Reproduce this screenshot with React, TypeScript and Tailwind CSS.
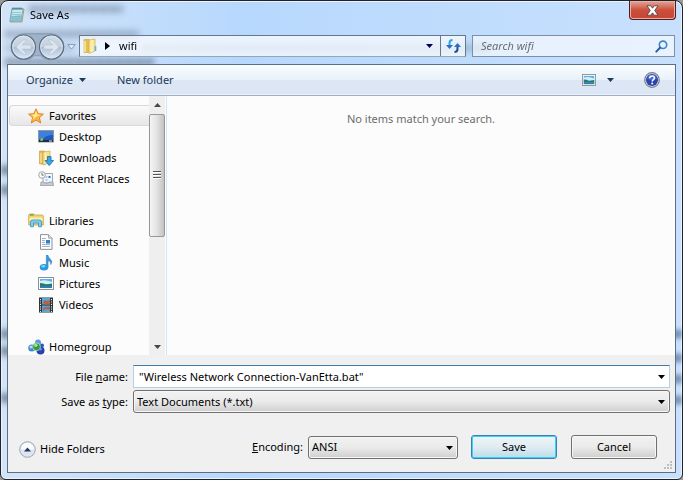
import React, { ReactNode } from "react";

function Svg({ w, h, children, className = "" }: { w: number; h: number; children: ReactNode; className?: string }) {
  return (
    <svg width={w} height={h} viewBox={`0 0 ${w} ${h}`} className={`shrink-0 ${className}`} aria-hidden="true">
      {children}
    </svg>
  );
}

function Caret({ className = "" }: { className?: string }) {
  return (
    <Svg w={7} h={4} className={className}>
      <path d="M0 0h7L3.5 4z" fill="currentColor" />
    </Svg>
  );
}

function NotepadIcon() {
  return (
    <Svg w={16} h={16}>
      <path d="M3 2h12l-2 13H1z" fill="#d8c9a0" stroke="#8f8a78" strokeWidth=".7" />
      <path d="M3 1.5h11l-2 12.5H.8z" fill="#8fc9d8" stroke="#68a3b5" strokeWidth=".6" />
      <path d="M3.6 3h9.6l-.8 5L2.8 9z" fill="#c9ebf0" />
      <path d="M3.2 5.5h9M2.9 7.5h9M2.6 9.5h9M2.3 11.5h9" stroke="#6db0c0" strokeWidth=".6" />
      <path d="M4 .5v2M6 .5v2M8 .5v2M10 .5v2M12 .5v2" stroke="#45565c" strokeWidth=".9" />
    </Svg>
  );
}

function FolderIcon() {
  return (
    <Svg w={14} h={16}>
      <path d="M1 1.5h5l1 1v12H1z" fill="#e4be4e" stroke="#c9a23b" strokeWidth=".6" />
      <path d="M6 2l6-1v12l-6 2.5z" fill="#f8e69c" stroke="#d0ac48" strokeWidth=".7" />
      <path d="M2 3v11M9 2v12" stroke="#fff4bd" strokeWidth="1.2" />
      <path d="M12.5 8v5" stroke="#5fb4dc" strokeWidth="1.6" />
    </Svg>
  );
}

function NavArrows() {
  return (
    <div className="relative flex h-7 w-[55px] shrink-0 gap-[2px]">
      <svg width="55" height="28" className="absolute inset-0" aria-hidden="true">
        <defs>
          <linearGradient id="orb" x2="0" y2="1">
            <stop stopColor="#d2dce7" />
            <stop offset=".48" stopColor="#c3d0df" />
            <stop offset=".52" stopColor="#b0c0d2" />
            <stop offset="1" stopColor="#d9e9fa" />
          </linearGradient>
        </defs>
        <path d="M14 .8h27a13 13 0 0 1 0 26q-7 0-10-4h-7q-3 4-10 4a13 13 0 0 1 0-26z" fill="#9eb2c9" stroke="#8195ad" />
        <circle cx="13.500" cy="14" r="12" fill="url(#orb)" stroke="#5d6e83" strokeWidth="1.2" />
        <circle cx="41.500" cy="14" r="12" fill="url(#orb)" stroke="#5d6e83" strokeWidth="1.2" />
        <circle cx="13.500" cy="14" r="10.800" fill="none" stroke="#dfe9f3" strokeWidth=".8" />
        <circle cx="41.500" cy="14" r="10.800" fill="none" stroke="#dfe9f3" strokeWidth=".8" />
        <path d="M6 14l7-7h4l-5 5h9v4h-9l5 5h-4z" fill="#dce5ef" stroke="#b3c2d2" strokeWidth=".6" />
        <path d="M49 14l-7-7h-4l5 5h-9v4h9l-5 5h4z" fill="#dce5ef" stroke="#b3c2d2" strokeWidth=".6" />
      </svg>
      <button aria-label="Back" className="relative h-7 flex-1 rounded-full" />
      <button aria-label="Forward" className="relative h-7 flex-1 rounded-full" />
    </div>
  );
}

function RefreshIcon() {
  return (
    <Svg w={15} h={14}>
      <path d="M6.500 1Q3.500 1 3.500 4v3" fill="none" stroke="#2fa4e6" strokeWidth="2" />
      <path d="M0 6h7L3.500 10z" fill="#2b6fc0" />
      <path d="M8.500 13q3 0 3-3V7" fill="none" stroke="#1c4d9c" strokeWidth="2" />
      <path d="M8 8h7l-3.500-4z" fill="#2b6fc0" />
    </Svg>
  );
}

function SearchIcon() {
  return (
    <Svg w={13} h={13}>
      <circle cx="8" cy="4.800" r="3.700" fill="#eaf6ff" stroke="#3a86cc" strokeWidth="1.600" />
      <path d="M5.200 7.500L1.300 11.600" stroke="#2a5dab" strokeWidth="2" strokeLinecap="round" />
    </Svg>
  );
}

function PictureIcon({ w, h }: { w: number; h: number }) {
  return (
    <svg width={w} height={h} viewBox="0 0 16 13" preserveAspectRatio="none" className="shrink-0" aria-hidden="true">
      <rect x=".5" y=".5" width="15" height="12" fill="#fff" stroke="#8a9299" />
      <rect x="2" y="2" width="12" height="9" fill="#5fb2e6" />
      <path d="M2 4q5-2 12 1v2H2z" fill="#d5effa" />
      <path d="M2 6q4 0 6 1.500l6-1V9H2z" fill="#2b7a62" />
      <path d="M2 9h12v2H2z" fill="#2f7fae" />
    </svg>
  );
}

function HelpIcon() {
  return (
    <svg width="16" height="16" viewBox="0 0 16 16" aria-hidden="true">
      <circle cx="8" cy="8" r="7.300" fill="#d9dce2" stroke="#7b828d" strokeWidth="1.200" />
      <circle cx="8" cy="8" r="6" fill="#2745ac" />
      <path d="M3 6.500a5.200 5.200 0 0 1 10 0q-5 3-10 0z" fill="#4a6ccb" />
      <path d="M5.700 6.300q0-2.300 2.400-2.300t2.300 2c0 1.500-2.200 1.600-2.200 3.400" fill="none" stroke="#fff" strokeWidth="1.600" />
      <circle cx="8.200" cy="11.600" r="1" fill="#fff" />
    </svg>
  );
}

function StarIcon() {
  return (
    <Svg w={16} h={16}>
      <path d="M8 .8l2.100 4.900 5.300.4-4 3.500 1.300 5.400L8 12.100 3.300 15l1.300-5.400-4-3.500 5.300-.4z" fill="#fbb33b" stroke="#e27a24" strokeWidth=".9" />
      <path d="M8 3l1.400 3.500 3.600.4-4.500 1.600L4.500 12l1.200-3.500L3 6.800l3.500-.3z" fill="#ffe991" />
    </Svg>
  );
}

function DesktopIcon() {
  return (
    <Svg w={16} h={14}>
      <rect x=".5" y=".5" width="15" height="11.500" fill="#2358b6" stroke="#8b98a8" />
      <path d="M1 1h14v4Q8 5 5 9H1z" fill="#3f80dc" />
      <path d="M1 10h14v2H1z" fill="#1d2c49" />
      <circle cx="3.500" cy="9.800" r="1.500" fill="#58b84c" />
      <path d="M3.500 8.300v1.500H5a1.500 1.500 0 0 0-1.500-1.500z" fill="#f5cf31" />
      <path d="M11 11h3" stroke="#e8eef4" />
    </Svg>
  );
}

function DownloadsIcon() {
  return (
    <Svg w={16} h={16}>
      <path d="M1.500 1h5v13h-5z" fill="#e2ba50" stroke="#c49a3b" strokeWidth=".6" />
      <path d="M5 2l7-1v12l-7 2z" fill="#f6e293" stroke="#caa650" strokeWidth=".7" />
      <path d="M3 3v10M7.500 3v9" stroke="#fff3b9" />
      <path d="M9.500 6.500h3.500v4h2.500L11.300 15.500 7 10.500h2.500z" fill="#38a6e8" stroke="#196aa9" strokeWidth=".8" />
    </Svg>
  );
}

function RecentIcon() {
  return (
    <Svg w={16} h={16}>
      <path d="M5 2.500h9.500V12H5z" fill="#f5f8fa" stroke="#a3a8ad" />
      <path d="M7.500 5h2v2h-2zM7.500 8h2v2h-2z" fill="#a9cbe8" />
      <path d="M10.500 5h2v2h-2z" fill="#2474cc" />
      <path d="M3 11h3l1 1h3l1-1h4l.5 3.500H2.500z" fill="#c6cacf" stroke="#8f959b" strokeWidth=".7" />
      <circle cx="4" cy="4" r="3.300" fill="#f8fafb" stroke="#a0a7ad" />
      <path d="M4 2v2.200h1.600" fill="none" stroke="#4c5660" strokeWidth=".8" />
    </Svg>
  );
}

function LibrariesIcon() {
  return (
    <Svg w={16} h={15}>
      <path d="M.7 2Q.7 1 2 1h4l1 1h7.500l.8 1v9H.7z" fill="#efd272" stroke="#c5a34b" strokeWidth=".8" />
      <path d="M2 2h3.500" stroke="#55a640" strokeWidth="1.300" />
      <path d="M1.500 4.500h13V8h-13z" fill="#fbeeae" />
      <path d="M2.500 13.800V9q0-2 2-2h7q2 0 2 2v4.800h-3V10h-5v3.800z" fill="#78cdf0" stroke="#3d94c0" strokeWidth=".8" />
    </Svg>
  );
}

function DocumentsIcon() {
  return (
    <Svg w={16} h={16}>
      <path d="M2.500.6h8l3.500 3.500v11.300H2.500z" fill="#fbfdff" stroke="#80878f" strokeWidth=".9" />
      <path d="M10.500.8v3.300H14" fill="#dce5ed" stroke="#80878f" strokeWidth=".7" />
      <path d="M4 4.500h4M4 6.500h3M4 8.500h3M4 10.500h8M4 12.500h8" stroke="#8ba0ba" strokeWidth=".8" />
      <path d="M8 6h4v3.500H8z" fill="#2e7fc7" />
    </Svg>
  );
}

function MusicIcon() {
  return (
    <Svg w={16} h={16}>
      <path d="M8.300 0h1.500q.4 2.500 2.700 4.200 2.500 2.200.3 5.500.4-3-2.700-3.900V12.500H8.300z" fill="#3997db" stroke="#2270b5" strokeWidth=".4" />
      <ellipse cx="6" cy="12.200" rx="4.200" ry="3.200" fill="#2798de" />
      <ellipse cx="5.300" cy="11.200" rx="2.200" ry="1.300" fill="#80cdf5" />
    </Svg>
  );
}

function VideosIcon() {
  return (
    <Svg w={16} h={16}>
      <path d="M1 .5h14v15H1z" fill="#283333" />
      <path d="M4 1h8v6.500H4zm0 7.500h8V15H4z" fill="#55a7e1" />
      <path d="M5 5q2-3 4-1l3-1v4.500H6zm0 6q4-2 7-1v3l-4-1-3 2z" fill="#b66243" />
      <path d="M2.500 2v13M13.500 2v13" stroke="#e6eded" strokeWidth="1.100" strokeDasharray="1.200 1.200" />
    </Svg>
  );
}

function HomegroupIcon() {
  return (
    <Svg w={17} h={16}>
      <circle cx="10" cy="3.500" r="3" fill="#5b9bdd" />
      <circle cx="3.800" cy="9" r="3.600" fill="#4389d2" />
      <circle cx="12.500" cy="11.500" r="4" fill="#2742ad" />
      <circle cx="14" cy="6.500" r="2" fill="#2f55bd" />
      <circle cx="8.500" cy="7.800" r="3.900" fill="#2f9a3e" stroke="#d0ebd2" strokeWidth=".7" />
      <circle cx="7.800" cy="6.300" r="1.700" fill="#a3e38e" />
      <circle cx="12.300" cy="10" r="1.500" fill="#7498e5" />
      <circle cx="3" cy="8" r="1.500" fill="#b5dbfa" />
    </Svg>
  );
}

/* Blurred editor contents showing through the glass frame. */
function GlassBackdrop() {
  return (
    <div aria-hidden="true" className="pointer-events-none absolute inset-0 overflow-hidden rounded-[inherit]">
      <svg width="100%" height="100%" className="absolute inset-0 blur-[3px]">
        <g stroke="#4a5d75" strokeWidth="7" strokeDasharray="9 1" opacity=".6">
          <path d="M28 8H122" opacity=".75" />
          <path d="M4 33H138" opacity=".7" />
          <path d="M4 61H153" />
          <path d="M4 47H72" opacity=".4" />
          <path d="M140 47H490" opacity=".5" />
        </g>
        <path d="M0 169H9M0 189H9M0 333H9M0 350H9M0 397H9" stroke="#2c4868" strokeWidth="9" opacity=".65" />
      </svg>
      <svg width="9" height="100%" className="absolute top-0 right-0 blur-[2px]">
        <path d="M0 333H9M0 357H9M0 378H9M0 399H9" stroke="#3e6288" strokeWidth="9" opacity=".6" />
      </svg>
    </div>
  );
}

function NavRow({ icon, children, root = false, selected = false }: { icon: ReactNode; children: ReactNode; root?: boolean; selected?: boolean }) {
  return (
    <li
      className={`flex h-[21px] shrink-0 items-center gap-[5px] border ${root ? "pl-[18px]" : "pl-7"} ${
        selected ? "rounded-l-sm border-r-0 border-[#d9d9d9] bg-linear-to-b from-[#fafafa] to-[#e7e7e7]" : "border-transparent"
      }`}
    >
      <span className="flex w-4 shrink-0 justify-center">{icon}</span>
      <a href="#" className="whitespace-nowrap">{children}</a>
    </li>
  );
}

export default function App() {
  const classic = "rounded-[3px] border border-[#707070] bg-linear-to-b from-[#f2f2f2] from-0% via-[#ebebeb] via-48% to-[#cfcfcf] shadow-[inset_0_0_0_1px_#f7f7f7]";
  return (
    <div className="bg-[#999] font-['Noto_Sans','Open_Sans',sans-serif] text-[11px] leading-4 text-black">
      <div className="relative flex h-screen min-h-[400px] flex-col rounded-t-lg rounded-b-md border border-[#20232b] bg-linear-to-r from-[#d3e4f8] via-[#b7d8fd] via-35% to-[#c8e0fd] px-[6px] pb-[6px] shadow-[inset_0_0_0_1px_#e9f4ff]">
        <GlassBackdrop />

        <header className="relative flex h-[33px] shrink-0 items-start justify-between">
          <h1 className="flex items-center gap-[5px] pt-[6px] pl-[2px] font-normal">
            <NotepadIcon />
            Save As
          </h1>
          <button
            aria-label="Close"
            className="flex h-[19px] w-[47px] items-center justify-center rounded-b-[4px] border border-t-0 border-[#4b1d20] bg-linear-to-b from-[#e0a59b] from-0% via-[#cb4f3b] via-50% to-[#c84532] shadow-[inset_0_0_0_1px_#ecb1a5]"
          >
            <Svg w={13} h={11}>
              <path d="M1 .8h3.800l1.700 2.400L8.200.8H12L8.700 5.500 12 10.200H8.200L6.500 7.800 4.800 10.200H1l3.300-4.700z" fill="#fff" stroke="#54474c" strokeWidth=".9" />
            </Svg>
          </button>
        </header>

        <nav className="relative flex h-[30px] shrink-0 items-start gap-[6px] pt-px pr-px pl-[3px]">
          <div className="flex h-6 items-center gap-[2px]">
            <NavArrows />
            <button aria-label="Recent locations" className="flex h-6 w-[9px] items-center">
              <Svg w={9} h={6}>
                <path d="M.8.6h7.400L4.500 5z" fill="#e3eefb" stroke="#7993b0" strokeWidth=".9" />
              </Svg>
            </button>
          </div>
          <div className="-ml-[3px] flex h-[22px] min-w-0 flex-1 items-stretch border border-[#67788c] border-b-[#94a6ba] bg-white/70">
            <div className="flex min-w-0 flex-1 items-center pl-[3px]">
              <FolderIcon />
              <Svg w={5} h={8} className="ml-2">
                <path d="M0 0v8l5-4z" fill="#000" />
              </Svg>
              <span className="ml-[9px]">wifi</span>
            </div>
            <button aria-label="Previous locations" className="flex w-[18px] items-center justify-center pr-1 text-[#00005a]">
              <Caret />
            </button>
            <button aria-label="Refresh" className="flex w-[25px] items-center justify-center border-l border-[#67788c]">
              <RefreshIcon />
            </button>
          </div>
          <div className="flex h-[22px] w-[203px] items-center border border-[#7c90a6] bg-white/60 pr-[6px] pl-2">
            <input aria-label="Search wifi" placeholder="Search wifi" className="min-w-0 flex-1 bg-transparent italic outline-none placeholder:text-[#666c73]" />
            <button aria-label="Search">
              <SearchIcon />
            </button>
          </div>
        </nav>

        <main className="relative flex min-h-0 flex-1 flex-col border border-[#5b6e84] bg-[#f0f0f0]">
          <div className="flex h-[31px] shrink-0 items-center border-b border-[#a0afc3] bg-linear-to-b from-[#fafdff] from-0% via-[#e8f1fb] via-50% to-[#dce6f4] to-50% pr-[15px] pl-[18px] text-[#1e395b] shadow-[inset_0_-1px_0_#e8f2fc]">
            <button className="flex items-center gap-[6px]">
              Organize <Caret />
            </button>
            <button className="ml-[31px]">New folder</button>
            <button aria-label="Change view" className="ml-auto flex items-center">
              <PictureIcon w={14} h={12} />
            </button>
            <button aria-label="More view options" className="ml-[11px]">
              <Caret />
            </button>
            <button aria-label="Help" className="ml-[30px]">
              <HelpIcon />
            </button>
          </div>

          <div className="flex min-h-0 flex-1 bg-[#fcfcfc]">
            <div className="flex w-[159px] shrink-0 border-r border-[#d6e5f5]">
              <ul className="flex min-w-0 flex-1 flex-col overflow-hidden pt-[9px] pl-px">
                <NavRow root selected icon={<StarIcon />}>Favorites</NavRow>
                <NavRow icon={<DesktopIcon />}>Desktop</NavRow>
                <NavRow icon={<DownloadsIcon />}>Downloads</NavRow>
                <NavRow icon={<RecentIcon />}>Recent Places</NavRow>
                <li className="h-[21px] shrink-0" />
                <NavRow root icon={<LibrariesIcon />}>Libraries</NavRow>
                <NavRow icon={<DocumentsIcon />}>Documents</NavRow>
                <NavRow icon={<MusicIcon />}>Music</NavRow>
                <NavRow icon={<PictureIcon w={16} h={13} />}>Pictures</NavRow>
                <NavRow icon={<VideosIcon />}>Videos</NavRow>
                <li className="h-[21px] shrink-0" />
                <NavRow root icon={<HomegroupIcon />}>Homegroup</NavRow>
              </ul>
              <div className="mr-px flex w-4 shrink-0 flex-col bg-[#efefef] text-[#484848]">
                <button aria-label="Scroll up" className="flex h-[18px] items-center justify-center">
                  <Caret className="rotate-180" />
                </button>
                <div className="flex h-[123px] flex-col items-center justify-center gap-px rounded-[2px] border border-[#979797] bg-linear-to-r from-[#f5f5f5] via-[#e2e2e2] via-50% to-[#c2c2c5]">
                  <Svg w={8} h={9}>
                    <path d="M0 .5h8M0 3.500h8M0 6.500h8" stroke="#555" />
                    <path d="M0 1.500h8M0 4.500h8M0 7.500h8" stroke="#fff" />
                  </Svg>
                </div>
                <button aria-label="Scroll down" className="mt-auto flex h-[17px] items-center justify-center">
                  <Caret />
                </button>
              </div>
            </div>
            <p className="flex-1 pt-[15px] text-center text-[#6d6d6d]">No items match your search.</p>
          </div>

          <form className="relative shrink-0 pt-[10px] pr-[5px] pb-[13px]" onSubmit={(e) => e.preventDefault()}>
            <div className="grid grid-cols-[120px_1fr] items-center gap-x-[5px] gap-y-[2px]">
              <label htmlFor="name" className="text-right">
                File <u>n</u>ame:
              </label>
              <div className="flex h-[23px] border border-[#b5cfe7] border-t-[#3d7bad] bg-white">
                <input id="name" defaultValue={'"Wireless Network Connection-VanEtta.bat"'} className="min-w-0 flex-1 pl-[5px] outline-none" />
                <button type="button" aria-label="Previous file names" className="flex w-4 items-center justify-center">
                  <Caret />
                </button>
              </div>
              <label htmlFor="type" className="text-right">
                Save as <u>t</u>ype:
              </label>
              <div className="relative flex h-[23px]">
                <select id="type" className={`flex-1 appearance-none pl-[3px] outline-none ${classic}`}>
                  <option>Text Documents (*.txt)</option>
                </select>
                <Caret className="pointer-events-none absolute top-[10px] right-[5px]" />
              </div>
            </div>
            <div className="mt-[22px] flex items-center pr-[13px] pl-[11px]">
              <button type="button" className="flex items-center gap-1 pt-1">
                <Svg w={17} h={17}>
                  <circle cx="8.500" cy="8.500" r="7.800" fill="#dfe5ed" stroke="#9ba7b8" />
                  <path d="M1.800 8.500a6.700 6.700 0 0 1 13.400 0z" fill="#f9fbfd" />
                  <path d="M5 10.500h7L8.500 6.500z" fill="#1e3969" />
                </Svg>
                Hide Folders
              </button>
              <label htmlFor="encoding" className="ml-auto">
                <u>E</u>ncoding:
              </label>
              <div className="relative ml-[5px] flex h-[23px] w-[150px]">
                <select id="encoding" className={`flex-1 appearance-none pl-[3px] outline-none ${classic}`}>
                  <option>ANSI</option>
                </select>
                <Caret className="pointer-events-none absolute top-[10px] right-[5px]" />
              </div>
              <button
                type="submit"
                className="ml-[13px] h-6 w-[86px] rounded-[3px] border border-[#3c7fb1] bg-linear-to-b from-[#eef5f8] from-0% via-[#dfecf2] via-50% to-[#bddbe8] shadow-[inset_0_0_0_1px_#35d3fb]"
              >
                Save
              </button>
              <button type="button" className={`ml-[14px] h-6 w-[86px] ${classic}`}>
                Cancel
              </button>
            </div>
            <Svg w={9} h={9} className="absolute right-[2px] bottom-[2px]">
              <path d="M6 0h2v2H6zM3 3h2v2H3zM6 3h2v2H6zM0 6h2v2H0zM3 6h2v2H3zM6 6h2v2H6z" fill="#bfbfbf" />
            </Svg>
          </form>
        </main>
      </div>
    </div>
  );
}
